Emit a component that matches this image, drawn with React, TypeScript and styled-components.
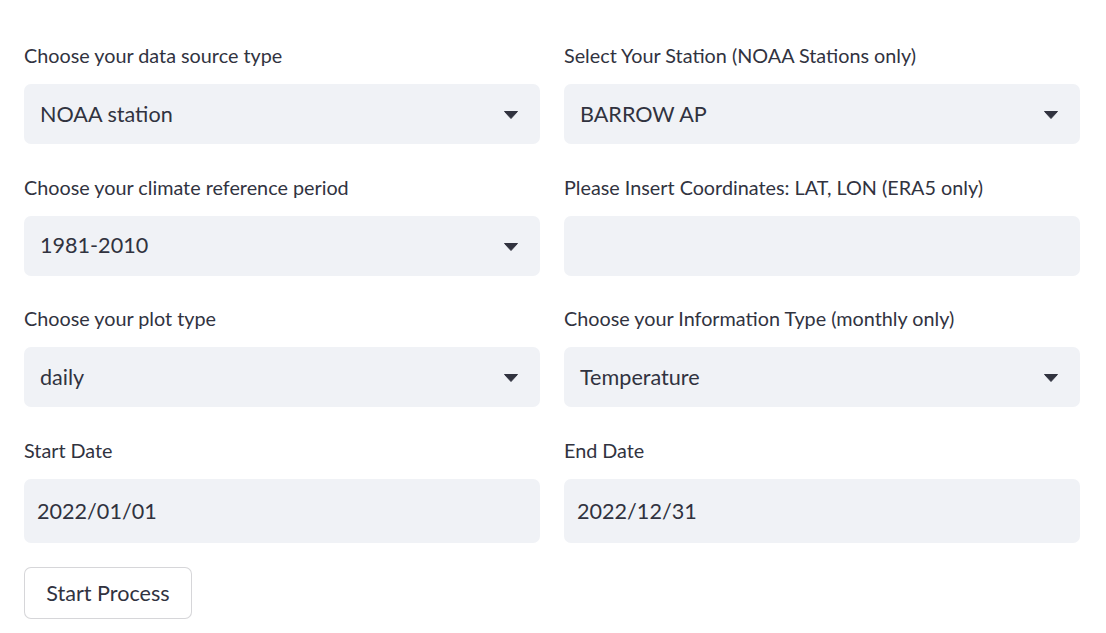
import styled, { createGlobalStyle } from "styled-components"

const GlobalStyle = createGlobalStyle`
  body {
    margin: 0;
    background: #ffffff;
    font-family: Lato, "Open Sans", sans-serif;
    color: #31333f;
  }
`

type Field = {
  label: string
  value: string
  kind: "select" | "text" | "date"
}

const fields: Field[] = [
  { label: "Choose your data source type", value: "NOAA station", kind: "select" },
  { label: "Select Your Station (NOAA Stations only)", value: "BARROW AP", kind: "select" },
  { label: "Choose your climate reference period", value: "1981-2010", kind: "select" },
  { label: "Please Insert Coordinates: LAT, LON (ERA5 only)", value: "", kind: "text" },
  { label: "Choose your plot type", value: "daily", kind: "select" },
  { label: "Choose your Information Type (monthly only)", value: "Temperature", kind: "select" },
  { label: "Start Date", value: "2022/01/01", kind: "date" },
  { label: "End Date", value: "2022/12/31", kind: "date" },
]

const Caret = () => (
  <svg width="16" height="10" viewBox="0 0 16 10">
    <path d="M1.5 1.5 H14.5 L8 8.5 Z" fill="#31333f" stroke="#31333f" strokeWidth="1" strokeLinejoin="round" />
  </svg>
)

const App = () => {
  return (
    <Page>
      <GlobalStyle />
      <Form>
        {fields.map((f) => (
          <FieldBox key={f.label}>
            <Label>{f.label}</Label>
            {f.kind === "select" && (
              <SelectBox>
                <span>{f.value}</span>
                <Caret />
              </SelectBox>
            )}
            {f.kind === "text" && <TextBox />}
            {f.kind === "date" && <DateBox>{f.value}</DateBox>}
          </FieldBox>
        ))}
      </Form>
      <Button>Start Process</Button>
    </Page>
  )
}

export default App

const Page = styled.div`
  padding: 40px 26px 14px 24px;
`

const Form = styled.div`
  display: grid;
  grid-template-columns: 1fr 1fr;
  column-gap: 24px;
  row-gap: 27.6px;
`

const FieldBox = styled.div`
  display: flex;
  flex-direction: column;
`

const Label = styled.div`
  height: 30px;
  line-height: 30px;
  font-size: 19.8px;
  margin-bottom: 14px;
  color: #31333f;
  white-space: nowrap;
`

const SelectBox = styled.div`
  height: 60px;
  box-sizing: border-box;
  background: #f0f2f6;
  border-radius: 7px;
  display: flex;
  align-items: center;
  justify-content: space-between;
  padding: 0 21px 0 16px;
  font-size: 21.6px;
  color: #31333f;

  span {
    margin-top: -1px;
  }

  svg {
    margin-top: 2px;
  }
`

const TextBox = styled.div`
  height: 60px;
  background: #f0f2f6;
  border-radius: 7px;
`

const DateBox = styled.div`
  height: 64px;
  box-sizing: border-box;
  background: #f0f2f6;
  border-radius: 7px;
  display: flex;
  align-items: center;
  padding-left: 13px;
  font-size: 21.6px;
  color: #31333f;
`

const Button = styled.button`
  margin-top: 24px;
  height: 52px;
  width: 168px;
  background: #ffffff;
  border: 1px solid rgba(49, 51, 63, 0.2);
  border-radius: 7px;
  font-family: Lato, "Open Sans", sans-serif;
  font-size: 21.6px;
  color: #31333f;
  padding: 0;
`
